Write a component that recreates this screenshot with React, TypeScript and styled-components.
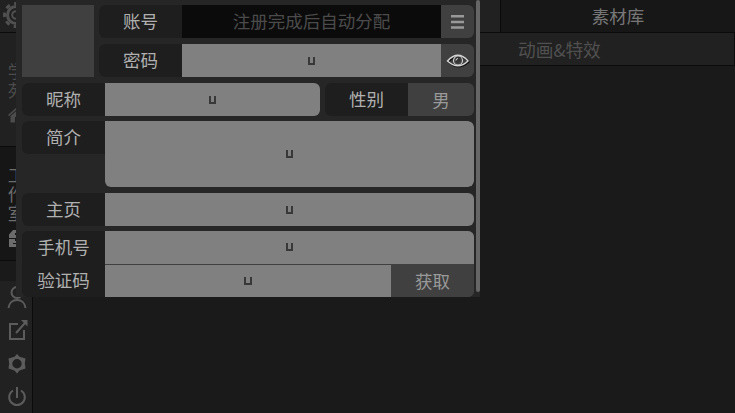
import type { ReactNode } from "react";
import styled, { createGlobalStyle } from "styled-components";

const GlobalStyle = createGlobalStyle`
  * {
    box-sizing: border-box;
  }
  body {
    background: #1a1a1a;
    font-family: "Noto Sans CJK SC", sans-serif;
    font-size: 17.5px;
    margin: 0;
    overflow: hidden;
  }
`;

const Screen = styled.div`
  background: #1a1a1a;
  display: flex;
  height: 413px;
  position: relative;
  width: 735px;
`;

const Sidebar = styled.aside`
  background: #212121;
  border-right: 1px solid #0b0b0b;
  display: flex;
  flex-direction: column;
  width: 33px;
`;

const SidebarLogo = styled.div`
  border-bottom: 1px solid #0b0b0b;
  height: 33px;
  padding: 1px 0 0 2px;
`;

const SidebarTab = styled.div<{ $active?: boolean }>`
  align-items: center;
  background: ${({ $active }) => ($active ? "#161616" : "#212121")};
  border-bottom: 1px solid #0b0b0b;
  color: ${({ $active }) => ($active ? "#6c6c6c" : "#4c4c4c")};
  display: flex;
  flex-direction: column;
  height: 114px;
  justify-content: center;
  line-height: 19px;
  padding: 5px 0 0 1px;

  svg {
    margin-top: 8px;
  }
`;

const SidebarGap = styled.div`
  background: #1a1a1a;
  height: 20px;
`;

const SidebarTools = styled.div`
  align-items: center;
  display: flex;
  flex: 1;
  flex-direction: column;
  gap: 9px;
  padding: 5px 0 0 1px;
`;

const Main = styled.main`
  flex: 1;
`;

const TabRow = styled.div`
  background: #212121;
  border-bottom: 1px solid #0b0b0b;
  display: flex;
  height: 33px;
  justify-content: flex-end;
`;

const Tab = styled.div`
  background: #171717;
  border-left: 1px solid #0b0b0b;
  color: #777;
  line-height: 31px;
  text-align: center;
  width: 235px;
`;

const SubTabRow = styled.div`
  background: #212121;
  border-bottom: 1px solid #0b0b0b;
  border-right: 1px solid #0b0b0b;
  color: #505050;
  font-size: 17.7px;
  height: 33px;
  line-height: 32px;
  padding-left: 485px;
`;

const Panel = styled.section`
  background: #262626;
  display: flex;
  flex-direction: column;
  gap: 5px;
  height: 297px;
  left: 16px;
  padding: 5px 6px 0;
  position: absolute;
  top: 0;
  width: 464px;
`;

const PanelScrollbar = styled.div`
  background: #666;
  border-radius: 2px;
  height: 292px;
  position: absolute;
  right: 0;
  top: 0;
  width: 4px;
`;

const AccountGroup = styled.div`
  display: flex;
  gap: 5px;
  margin-bottom: 1px;
`;

const Avatar = styled.div`
  background: #404040;
  height: 72px;
  width: 72px;
`;

const AccountRows = styled.div`
  display: flex;
  flex-direction: column;
  gap: 6px;
`;

const Row = styled.div<{ $width?: number }>`
  border-radius: 6px;
  display: flex;
  height: 33px;
  overflow: hidden;
  width: ${({ $width = 452 }) => $width}px;
`;

const IntroRow = styled(Row)`
  height: 66px;
  margin-bottom: 1px;
`;

const SplitRow = styled.div`
  display: flex;
  gap: 5px;
`;

const Label = styled.div`
  background: #1e1e1e;
  border-radius: 6px 0 0 6px;
  color: #b0b0b0;
  flex: none;
  height: 33px;
  line-height: 32.7px;
  text-align: center;
  width: 83px;
`;

const Field = styled.div<{ $rounded?: boolean }>`
  align-items: center;
  background: #808080;
  border-radius: ${({ $rounded }) => ($rounded ? "0 6px 6px 6px" : "0")};
  display: flex;
  flex: 1;
  justify-content: center;
`;

const DisabledField = styled(Field)`
  align-items: flex-start;
  background: #0b0b0b;
  color: #4b4b4b;
  line-height: 32.7px;
`;

const SpaceMark = styled.span`
  border: 2px solid #383838;
  border-top: 0;
  height: 8px;
  width: 7.5px;
`;

const ActionButton = styled.div<{ $width: number }>`
  align-items: center;
  background: #404040;
  color: #999;
  display: flex;
  justify-content: center;
  line-height: 31px;
  width: ${({ $width }) => $width}px;
`;

const PhoneGroup = styled.div`
  background: #1e1e1e;
  border-radius: 6px;
  display: flex;
  height: 66px;
  overflow: hidden;
`;

const PhoneLabels = styled.div`
  width: 83px;
`;

const PhoneFields = styled.div`
  background: #404040;
  display: flex;
  flex: 1;
  flex-direction: column;
  gap: 1px;
`;

const PhoneRow = styled.div`
  display: flex;
  flex: 1;
`;

const Home = () => (
  <svg width="18" height="16" viewBox="0 0 18 16" fill="currentColor">
    <path d="M9 0 0 8l1 1.200 8-7 8 7L18 8z" />
    <path d="M9 3.500 2.500 9v6.500H7V10h4v5.500h4.500V9z" />
  </svg>
);

const Case = () => (
  <svg width="18" height="17" viewBox="0 0 18 17" fill="currentColor">
    <path d="M1 4.500 5 0h8l4 4.500V8H1zM7 3v2h4V3z" fillRule="evenodd" />
    <path d="M1 9h6v2h4V9h6v8H1zM5 13v1h8v-1z" fillRule="evenodd" />
  </svg>
);

const ToolIcon = ({ children }: { children: ReactNode }) => (
  <svg width="24" height="24" viewBox="0 0 24 24" fill="none" stroke="#5c5c5c" strokeWidth="2">
    {children}
  </svg>
);

const Eye = () => (
  <svg width="24" height="18" viewBox="0 0 24 18" fill="none">
    <path d="M2.500 10Q12-1 23 10Q12 19.500 2.500 10Z" stroke="#111" strokeWidth="1.5" />
    <path d="M1.500 9Q12-2.500 22 9Q12 18.500 1.500 9Z" stroke="#d4d4d4" strokeWidth="1.4" />
    <circle cx="12" cy="8.500" r="4.500" stroke="#d4d4d4" strokeWidth="1.1" />
    <circle cx="12" cy="8.500" r="2.300" fill="#333" />
    <path d="M10 8.500a2 2 0 0 1 2-2" stroke="#d4d4d4" />
  </svg>
);

const Menu = () => (
  <svg width="13" height="14" viewBox="0 0 13 14" fill="#999">
    <path d="M0 0h13v2.500H0zM0 5.700h13v2.500H0zM0 11.300h13v2.500H0z" />
  </svg>
);

const SettingsLogo = () => (
  <svg width="28" height="28" viewBox="0 0 28 28" fill="none" stroke="#505050">
    <circle cx="14" cy="14" r="8.500" strokeWidth="3" />
    <circle cx="14" cy="14" r="3.800" strokeWidth="2" />
    <circle cx="14" cy="14" r="11.500" strokeWidth="3" strokeDasharray="4.516 4.516" strokeDashoffset="2.258" />
  </svg>
);

export default function App() {
  return (
    <Screen>
      <GlobalStyle />
      <Sidebar>
        <SidebarLogo>
          <SettingsLogo />
        </SidebarLogo>
        <SidebarTab>
          <span>学</span>
          <span>苑</span>
          <Home />
        </SidebarTab>
        <SidebarTab $active>
          <span>工</span>
          <span>作</span>
          <span>室</span>
          <Case />
        </SidebarTab>
        <SidebarGap />
        <SidebarTools>
          <ToolIcon>
            <circle cx="12" cy="6.500" r="5.500" />
            <path d="M3.500 22c.5-5 4-8 8.500-8s8 3 8.500 8" />
          </ToolIcon>
          <ToolIcon>
            <path d="M13 5H5v15h14v-9M11 14l9-10" />
            <path d="M16 1h6.500v6.500z" fill="#5c5c5c" stroke="none" />
          </ToolIcon>
          <ToolIcon>
            <path
              d="M12 2 14.500 4.800 20.500 6.500 19.800 11.500 20.500 16.500 14.500 18.600 12 21.500 9.500 18.600 3.500 16.500 4.200 11.500 3.500 6.500 9.500 4.800zM12 7a4.700 4.700 0 1 0 0 9.400 4.700 4.700 0 0 0 0-9.400z"
              fill="#5c5c5c"
              fillRule="evenodd"
              stroke="none"
            />
          </ToolIcon>
          <ToolIcon>
            <path d="M8 5.500a7.800 7.800 0 1 0 8 0M12 2v11" />
          </ToolIcon>
        </SidebarTools>
      </Sidebar>
      <Main>
        <TabRow>
          <Tab>素材库</Tab>
        </TabRow>
        <SubTabRow>动画&amp;特效</SubTabRow>
      </Main>

      <Panel>
        <AccountGroup>
          <Avatar />
          <AccountRows>
            <Row $width={375}>
              <Label>账号</Label>
              <DisabledField>注册完成后自动分配</DisabledField>
              <ActionButton $width={33}>
                <Menu />
              </ActionButton>
            </Row>
            <Row $width={375}>
              <Label>密码</Label>
              <Field>
                <SpaceMark />
              </Field>
              <ActionButton $width={33}>
                <Eye />
              </ActionButton>
            </Row>
          </AccountRows>
        </AccountGroup>
        <SplitRow>
          <Row $width={298}>
            <Label>昵称</Label>
            <Field>
              <SpaceMark />
            </Field>
          </Row>
          <Row $width={149}>
            <Label>性别</Label>
            <ActionButton $width={66}>男</ActionButton>
          </Row>
        </SplitRow>
        <IntroRow>
          <Label>简介</Label>
          <Field $rounded>
            <SpaceMark />
          </Field>
        </IntroRow>
        <Row>
          <Label>主页</Label>
          <Field>
            <SpaceMark />
          </Field>
        </Row>
        <PhoneGroup>
          <PhoneLabels>
            <Label>手机号</Label>
            <Label>验证码</Label>
          </PhoneLabels>
          <PhoneFields>
            <PhoneRow>
              <Field>
                <SpaceMark />
              </Field>
            </PhoneRow>
            <PhoneRow>
              <Field>
                <SpaceMark />
              </Field>
              <ActionButton $width={83}>获取</ActionButton>
            </PhoneRow>
          </PhoneFields>
        </PhoneGroup>
        <PanelScrollbar />
      </Panel>
    </Screen>
  );
}
